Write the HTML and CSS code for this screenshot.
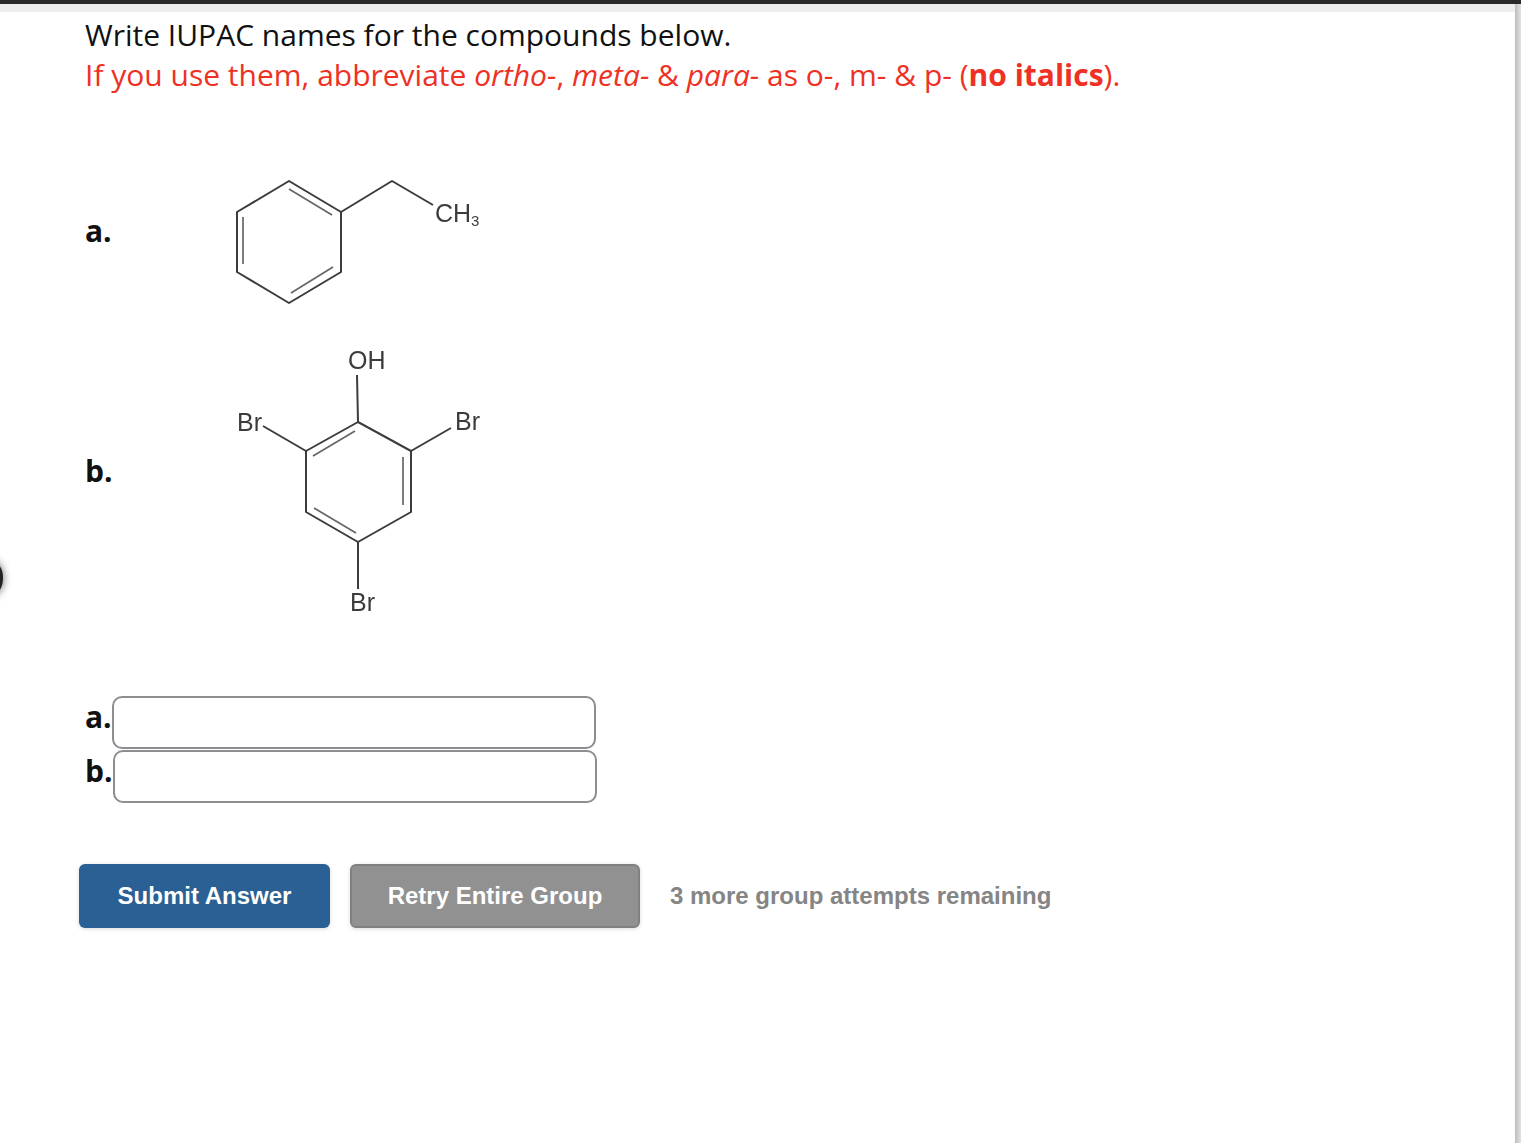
FILE: index.html
```html
<!DOCTYPE html>
<html lang="en">
<head>
    <meta charset="UTF-8" />
    <title>IUPAC names</title>
    <link rel="stylesheet" href="styles.css">
</head>
<body>
    <div class="top-bar"></div>
    <div class="sub-bar"></div>
    <div class="side-handle"></div>
    <div class="scroll-edge"></div>
    <main class="question">
        <p class="prompt">Write IUPAC names for the compounds below.</p>
        <p class="prompt note">If you use them, abbreviate <em>ortho-</em>, <em>meta-</em> &amp; <em>para-</em> as o-, m- &amp; p- (<strong>no italics</strong>).</p>

        <section class="compound compound-a">
            <span class="letter">a.</span>
            <svg class="structure" width="260" height="140" viewBox="220 170 260 140">
                <path d="M289 181 L341 212 L341 272 L289 303 L237 272 L237 212 Z M341 212 L392 181 L433 205" />
                <path class="inner" d="M289 189 L332 215 M333 267 L291 293 M243 264 L243 217" />
                <text x="435" y="222">CH<tspan class="sub" dy="4">3</tspan></text>
            </svg>
        </section>

        <section class="compound compound-b">
            <span class="letter">b.</span>
            <svg class="structure" width="260" height="280" viewBox="220 340 260 280">
                <path d="M358 422 L411 451 L411 512 L358 542 L306 512 L306 451 Z M358 422 L357 375 M306 451 L263 426 M411 451 L451 428 M358 542 L358 589" />
                <path class="inner" d="M313 456 L355 431 M403 505 L403 457 M314 508 L356 533" />
                <text x="348" y="369">OH</text>
                <text x="237" y="431">Br</text>
                <text x="455" y="430">Br</text>
                <text x="350" y="611">Br</text>
            </svg>
        </section>

        <div class="answers">
            <label class="answer answer-a"><span class="letter">a.</span><input type="text" /></label>
            <label class="answer answer-b"><span class="letter">b.</span><input type="text" /></label>
        </div>

        <div class="actions">
            <button class="btn btn-submit">Submit Answer</button>
            <button class="btn btn-retry">Retry Entire Group</button>
            <span class="attempts">3 more group attempts remaining</span>
        </div>
    </main>
</body>
</html>
```

FILE: styles.css
```css
html, body {
    height: 100%;
    overflow: hidden;
}

body {
    margin: 0;
    background-color: #ffffff;
    color: #111111;
    font-family: "Open Sans", "Noto Sans", sans-serif;
}

.top-bar {
    height: 4px;
    background-color: #2a2a2a;
}

.sub-bar {
    height: 8px;
    background-color: #eeeeee;
}

/* Right page edge */
.scroll-edge {
    position: absolute;
    top: 4px;
    right: 0;
    bottom: 0;
    width: 6px;
    background: linear-gradient(to right, #bdbdbd, #e2e2e2);
}

/* Half hidden control on the left edge */
.side-handle {
    position: absolute;
    left: -19px;
    top: 561px;
    width: 22px;
    height: 34px;
    border-radius: 50%;
    background-color: #222222;
    box-shadow: 0 0 8px rgba(0, 0, 0, 0.6);
}

.question {
    padding: 2px 0 0 85px;
}

.prompt {
    margin: 0;
    font-size: 30px;
    line-height: 41px;
}

.note {
    margin-top: -1px;
    color: #ee3124;
}

.compound {
    display: flex;
    align-items: center;
}

.compound-a {
    margin-top: 75px;
}

.compound-b {
    margin-top: 30px;
}

.letter {
    font-size: 30px;
    font-weight: 700;
    line-height: 38px;
}

.compound .letter {
    width: 135px;
    margin-bottom: 18px;
    flex-shrink: 0;
}

.structure {
    display: block;
    filter: blur(0.6px);
}

.structure path {
    fill: none;
    stroke: #3c3c3c;
    stroke-width: 2;
    stroke-linejoin: round;
}

.structure .inner {
    stroke: #666666;
    stroke-width: 1.7;
}

.structure text {
    font-family: "Liberation Sans", Arial, sans-serif;
    font-size: 25px;
    fill: #3c3c3c;
}

.structure .sub {
    font-size: 15px;
}

.answers {
    margin-top: 75px;
}

.answer {
    display: flex;
    align-items: center;
    height: 54px;
}

.answer .letter {
    margin-bottom: 10px;
}

.answer input {
    box-sizing: border-box;
    width: 484px;
    height: 53px;
    padding: 0 10px;
    border: 2px solid #8d8d92;
    border-radius: 10px;
    background-color: #ffffff;
}

.actions {
    display: flex;
    align-items: center;
    margin: 61px 0 0 -6px;
}

.btn {
    box-sizing: border-box;
    height: 64px;
    border-radius: 6px;
    color: #ffffff;
    font-family: "Liberation Sans", Arial, sans-serif;
    font-size: 24px;
    font-weight: 700;
    box-shadow: 0 1px 4px rgba(0, 0, 0, 0.15);
}

.btn-submit {
    width: 251px;
    border: none;
    background-color: #2a6094;
}

.btn-retry {
    width: 290px;
    margin-left: 20px;
    border: 2px solid #808080;
    background-color: #919191;
}

.attempts {
    margin-left: 30px;
    color: #858585;
    font-family: "Liberation Sans", Arial, sans-serif;
    font-size: 24px;
    font-weight: 700;
}
```
